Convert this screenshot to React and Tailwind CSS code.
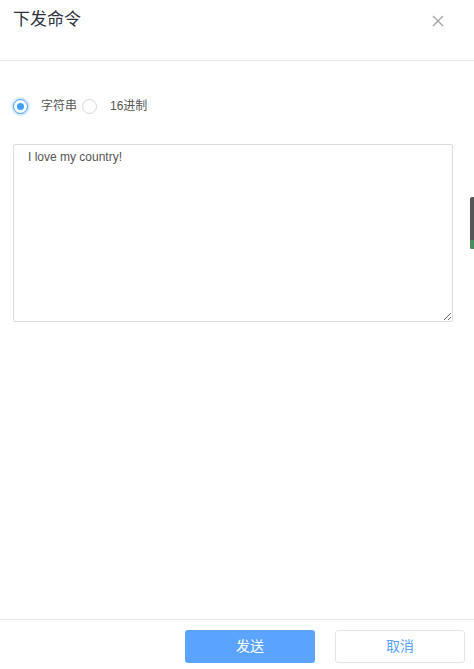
import React, { useState } from 'react';

const FONT = { fontFamily: '"Liberation Sans", "Noto Sans CJK SC", Arial, sans-serif' };

function Radio({ checked, label, onClick }) {
  return (
    <label className="flex items-center cursor-pointer" onClick={onClick}>
      <span
        className={
          checked
            ? 'flex h-[15px] w-[15px] items-center justify-center rounded-full border border-[#409eff] bg-white shadow-[0_0_0_2px_rgba(64,158,255,0.2)]'
            : 'flex h-[15px] w-[15px] items-center justify-center rounded-full border border-[#d4d7de] bg-white'
        }
      >
        {checked && <span className="h-[7px] w-[7px] rounded-full bg-[#409eff]" />}
      </span>
      <span className="ml-[13px] text-[12px] text-[#555]">{label}</span>
    </label>
  );
}

export default function App() {
  const [mode, setMode] = useState('str');
  const [text, setText] = useState('I love my country!');

  return (
    <div className="relative flex h-[669px] w-[474px] flex-col overflow-hidden bg-white" style={FONT}>
      {/* header */}
      <div className="flex h-[61px] shrink-0 items-start justify-between border-b border-[#e8e8e8] pl-[13px] pr-[30px] pt-[9px]">
        <span className="text-[17px] leading-[22px] text-[#2d3340]">下发命令</span>
        <button className="mt-[6px] text-[#a0a0a0]">
          <svg width="12" height="12" viewBox="0 0 12 12" fill="none" stroke="currentColor" strokeWidth="1.2">
            <path d="M1 1 L11 11 M11 1 L1 11" />
          </svg>
        </button>
      </div>

      {/* body */}
      <div className="flex flex-1 flex-col px-[13px] pt-[36px]">
        <div className="flex items-center gap-[5px]">
          <Radio checked={mode === 'str'} label="字符串" onClick={() => setMode('str')} />
          <Radio checked={mode === 'hex'} label="16进制" onClick={() => setMode('hex')} />
        </div>

        <textarea
          value={text}
          onChange={(e) => setText(e.target.value)}
          className="mt-[29px] h-[178px] w-[440px] resize rounded-[2px] border border-[#dcdcdc] px-[14px] py-[3px] text-[12px] leading-[18px] text-[#555] outline-none"
          style={FONT}
        />
      </div>

      {/* footer */}
      <div className="flex h-[50px] shrink-0 items-start justify-end gap-[20px] border-t border-[#e8e8e8] pr-[9px] pt-[10px]">
        <button className="h-[33px] w-[130px] rounded-[3px] bg-[#5aa4ff] text-[14px] text-white">发送</button>
        <button className="h-[33px] w-[130px] rounded-[3px] border border-[#e4e4e4] bg-white text-[14px] text-[#5aa4ff]">取消</button>
      </div>

      {/* side tab */}
      <div className="absolute right-0 top-[197px] flex h-[52px] w-[4px] flex-col overflow-hidden rounded-l-[2px] bg-[#555]">
        <div className="flex-1" />
        <div className="h-[9px] bg-[#4c8a5c]" />
      </div>
    </div>
  );
}
